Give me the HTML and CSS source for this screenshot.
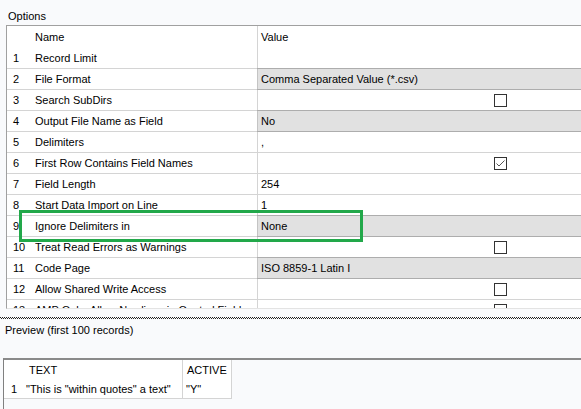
FILE: index.html
```html
<!DOCTYPE html>
<html>
<head>
<meta charset="utf-8">
<link rel="stylesheet" href="styles.css">
</head>
<body>
<div class="app">
  <div class="section-label">Options</div>
  <div class="options-grid">
    <div class="orow head"><div class="num"></div><div class="name">Name</div><div class="value">Value</div></div>
    <div class="orow"><div class="num">1</div><div class="name">Record Limit</div><div class="value"></div></div>
    <div class="orow"><div class="num">2</div><div class="name">File Format</div><div class="value combo">Comma Separated Value (*.csv)</div></div>
    <div class="orow"><div class="num">3</div><div class="name">Search SubDirs</div><div class="value check"><span class="cb"></span></div></div>
    <div class="orow"><div class="num">4</div><div class="name">Output File Name as Field</div><div class="value combo">No</div></div>
    <div class="orow"><div class="num">5</div><div class="name">Delimiters</div><div class="value">,</div></div>
    <div class="orow"><div class="num">6</div><div class="name">First Row Contains Field Names</div><div class="value check"><span class="cb"><svg width="11" height="11" viewBox="0 0 11 11"><path d="M1.5 5.5 L4 8 L9.5 2.5" fill="none" stroke="#555" stroke-width="1"/></svg></span></div></div>
    <div class="orow"><div class="num">7</div><div class="name">Field Length</div><div class="value">254</div></div>
    <div class="orow"><div class="num">8</div><div class="name">Start Data Import on Line</div><div class="value">1</div></div>
    <div class="orow"><div class="num">9</div><div class="name">Ignore Delimiters in</div><div class="value combo">None</div></div>
    <div class="orow"><div class="num">10</div><div class="name">Treat Read Errors as Warnings</div><div class="value check"><span class="cb"></span></div></div>
    <div class="orow"><div class="num">11</div><div class="name">Code Page</div><div class="value combo">ISO 8859-1 Latin I</div></div>
    <div class="orow"><div class="num">12</div><div class="name">Allow Shared Write Access</div><div class="value check"><span class="cb"></span></div></div>
    <div class="orow"><div class="num">13</div><div class="name">AMP Only: Allow Newlines in Quoted Fields</div><div class="value check"><span class="cb"></span></div></div>
  </div>
  <div class="splitter"></div>
  <div class="preview-label">Preview (first 100 records)</div>
  <div class="preview-grid">
    <div class="prow phead"><div class="pnum"></div><div class="pcol ptext">TEXT</div><div class="pcol pactive">ACTIVE</div></div>
    <div class="prow pdata"><div class="pnum">1</div><div class="pcol ptext">"This is "within quotes" a text"</div><div class="pcol pactive">"Y"</div></div>
  </div>
  <div class="highlight"></div>
</div>
</body>
</html>
```
FILE: styles.css
```css
body {
  margin: 0;
  background: #f9fafc;
  font-family: "Liberation Sans", Arial, sans-serif;
  font-size: 11px;
  color: #000;
}
.app {
  position: relative;
  width: 581px;
  height: 409px;
  overflow: hidden;
}
.section-label {
  height: 25px;
  box-sizing: border-box;
  padding: 10px 0 0 8px;
  line-height: 13px;
}
.options-grid {
  margin-left: 6px;
  border-left: 1px solid #a0a0a0;
  border-top: 1px solid #a0a0a0;
  border-bottom: 1px solid #e3e3e3;
  height: 282px;
  background: #fff;
  overflow: hidden;
}
.orow {
  display: flex;
  height: 20px;
  line-height: 20px;
  border-bottom: 1px solid #d4d4d4;
  white-space: nowrap;
}
.orow.head {
  height: 22px;
  line-height: 22px;
  border-bottom: none;
}
.num {
  flex: none;
  width: 23px;
  padding-left: 6px;
  box-sizing: border-box;
}
.name {
  flex: none;
  width: 227px;
  padding-left: 5px;
  box-sizing: border-box;
}
.value {
  flex: none;
  width: 486px;
  padding-left: 3px;
  box-sizing: border-box;
  border-left: 1px solid #d4d4d4;
}
.value.combo {
  background: #e1e1e1;
  border-left-color: #c4c4c4;
  box-shadow: 0 -1px 0 #adadad, 0 1px 0 #adadad;
}
.value.check {
  padding-left: 0;
  display: flex;
  align-items: center;
  justify-content: center;
}
.cb {
  width: 13px;
  height: 13px;
  box-sizing: border-box;
  border: 1px solid #333;
  background: #fff;
  display: block;
}
.cb svg {
  display: block;
}
.splitter {
  margin-top: 8px;
  height: 2px;
  background:
    repeating-linear-gradient(90deg, #222 0 1px, transparent 1px 2px) 0 0 / 100% 1px no-repeat,
    repeating-linear-gradient(90deg, transparent 0 1px, #222 1px 2px) 0 1px / 100% 1px no-repeat;
}
.preview-label {
  height: 39px;
  box-sizing: border-box;
  padding: 5px 0 0 5px;
  line-height: 13px;
}
.preview-grid {
  margin-left: 3px;
  border-left: 1px solid #808080;
  border-top: 2px solid #8a8a8a;
  height: 60px;
}
.prow {
  display: flex;
  width: 228px;
  background: #fff;
  white-space: nowrap;
}
.phead {
  height: 20px;
  line-height: 20px;
}
.pdata {
  height: 18px;
  line-height: 18px;
  border-bottom: 1px solid #d4d4d4;
}
.pnum {
  flex: none;
  width: 20px;
  padding-left: 7px;
  box-sizing: border-box;
}
.pcol {
  flex: none;
  box-sizing: border-box;
  border-right: 1px solid #d4d4d4;
}
.ptext {
  width: 159px;
}
.pactive {
  width: 49px;
}
.phead .ptext { padding-left: 5px; }
.pdata .ptext { padding-left: 2px; }
.phead .pactive { padding-left: 4px; }
.pdata .pactive { padding-left: 3px; }
.highlight {
  position: absolute;
  left: 19px;
  top: 210px;
  width: 344px;
  height: 32px;
  box-sizing: border-box;
  border: 3px solid #22a84a;
}
```
